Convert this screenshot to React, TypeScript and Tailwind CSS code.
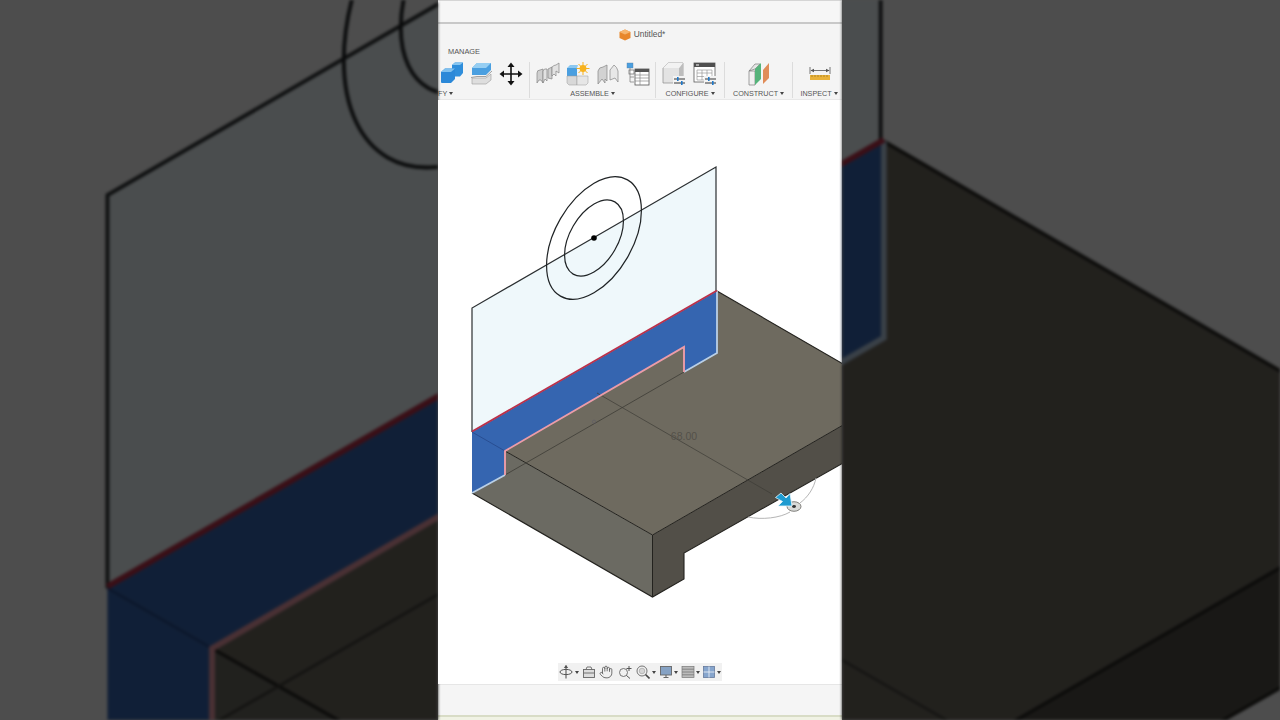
// App.tsx
import React from "react";
import { Hand } from "lucide-react";

function Model({ withLabel }: { withLabel?: boolean }) {
  return (
    <>
      {/* sketch plane */}
      <polygon points="472,308 716,167 716,291 472,432" fill="#eff8fb" />
      <polyline points="472,432 472,308 716,167 716,291" fill="none" stroke="#2b2f31" strokeWidth="1.2" />
      <ellipse cx="594" cy="238" rx="67.1" ry="38.7" transform="rotate(-60 594 238)" fill="none" stroke="#1f2325" strokeWidth="1.2" />
      <ellipse cx="594" cy="238" rx="41.7" ry="24" transform="rotate(-60 594 238)" fill="none" stroke="#1f2325" strokeWidth="1.2" />
      <circle cx="594" cy="238" r="2.8" fill="#000" />

      {/* solid */}
      <polygon points="505,451 684,347 684,372 717,353 717,291 850,368 850,421 652.5,535" fill="#6e6a5f" />
      <polygon points="472,493 505,475 505,451 652.5,535 652.5,597" fill="#6b6a62" />
      <polygon points="652.5,535 850,421 850,459 684,553 684,579 652.5,597" fill="#524f48" />
      <polygon points="472,432 717,291 717,353 684,372 684,347 505,451 505,475 472,493" fill="#3565b0" />

      <polyline points="717,291 850,368" fill="none" stroke="#23221e" strokeWidth="1.1" />
      <polyline points="505,451 652.5,535 850,421" fill="none" stroke="#23221e" strokeWidth="1" />
      <polyline points="472,493 652.5,597 684,579 684,553 850,459" fill="none" stroke="#23221e" strokeWidth="1.1" />
      <line x1="652.5" y1="535" x2="652.5" y2="597" stroke="#23221e" strokeWidth="1" />
      <line x1="505" y1="475" x2="684" y2="372" stroke="#3d3c36" strokeWidth="0.8" />
      <line x1="597" y1="393" x2="772" y2="494" stroke="#3d3c36" strokeWidth="0.7" />
      <line x1="472" y1="432" x2="505" y2="451" stroke="#25488a" strokeWidth="0.8" />
      <polyline points="472,493 505,475" fill="none" stroke="#b9cfe6" strokeWidth="1.8" />
      <polyline points="684,372 717,353 717,291" fill="none" stroke="#b9cfe6" strokeWidth="1.8" />
      <polyline points="505,475 505,451 684,347 684,372" fill="none" stroke="#ec9ca8" strokeWidth="1.9" />
      <line x1="472" y1="431.5" x2="717" y2="290.5" stroke="#bb3049" strokeWidth="1.8" />
      <circle cx="594" cy="421.7" r="1.6" fill="none" stroke="#5c5a66" strokeWidth="0.6" />

      {withLabel && (
        <text x="684" y="440" textAnchor="middle" fontSize="10.5" fill="#54514a" fontFamily="Liberation Sans, sans-serif">
          68.00
        </text>
      )}

      {/* drag handle */}
      <path d="M748 517 C762 520 780 518 790 512" fill="none" stroke="#b5b5b5" strokeWidth="1" />
      <path d="M800 503 C808 497 814 488 816 478" fill="none" stroke="#b5b5b5" strokeWidth="1" />
      <ellipse cx="794" cy="506.5" rx="7" ry="4.8" fill="#d9dad8" stroke="#55534d" strokeWidth="0.7" />
      <ellipse cx="794" cy="506.5" rx="2" ry="1.4" fill="#333" />
      <polygon points="792,506 778,506 782.5,501.5 775.5,497.5 781,493 786,498 790,493.5" fill="#1e9bd0" stroke="#e8f6fb" strokeWidth="0.8" />
    </>
  );
}

function Caret({ className = "" }: { className?: string }) {
  return (
    <svg viewBox="0 0 4 3" className={`h-[3px] w-[4px] shrink-0 ${className}`}>
      <polygon points="0,0 4,0 2,3" fill="#444" />
    </svg>
  );
}

function Combine() {
  return (
    <svg viewBox="0 0 24 24" className="h-6 w-6 shrink-0">
      <path d="M12 3 L15 0.5 H23 V11 L20 14.5 H12 Z" fill="#2f8edb" />
      <path d="M12 3 L15 0.5 H23 L20 3 Z" fill="#86c5f0" />
      <path d="M1 10 L5 6.5 H15 V17 L11 21 H2 Q1 21 1 20 Z" fill="#2b88d8" />
      <path d="M1 10 L5 6.5 H15 L11 10 Z" fill="#7fc0ee" />
    </svg>
  );
}

function SplitBox() {
  return (
    <svg viewBox="0 0 23 24" className="h-6 w-[23px] shrink-0">
      <path d="M2 6 L7 1 H21 V8 L16 13 H2 Z" fill="#4a9fe0" />
      <path d="M2 6 L7 1 H21 L16 6 Z" fill="#96cef2" />
      <path d="M1 15.5 L7 14.5 H16 L22 9" fill="none" stroke="#8a8a8a" strokeWidth="0.8" />
      <path d="M2 16 H16 L21 12 V18 L16 22 H2 Z" fill="#dedede" stroke="#9a9a9a" strokeWidth="0.6" />
    </svg>
  );
}

function MoveArrows() {
  return (
    <svg viewBox="0 0 24 24" className="h-6 w-6 shrink-0">
      <path d="M12 4 V20 M4 12 H20" stroke="#111" strokeWidth="1.6" />
      <polygon points="12,0.5 8.5,5 15.5,5" fill="#111" />
      <polygon points="12,23.5 8.5,19 15.5,19" fill="#111" />
      <polygon points="0.5,12 5,8.5 5,15.5" fill="#111" />
      <polygon points="23.5,12 19,8.5 19,15.5" fill="#111" />
    </svg>
  );
}

function JointPair() {
  return (
    <svg viewBox="0 0 24 24" className="h-6 w-6 shrink-0">
      <path d="M1 21 V11 Q1 8 4 8 L7 7 V21 L5 18 H3 Z" fill="#cfcfcf" stroke="#858585" strokeWidth="0.7" />
      <path d="M7 21 V9 Q8 6 11 7 V19 L9 17 Z" fill="#e2e2e2" stroke="#858585" strokeWidth="0.7" />
      <path d="M12 16 V7 L16 5 V17 Z" fill="#cfcfcf" stroke="#858585" strokeWidth="0.7" />
      <path d="M16 14 V5 Q18 3 20 3 L23 1 V11 L20 9 V14 L18 12 Z" fill="#e2e2e2" stroke="#858585" strokeWidth="0.7" />
    </svg>
  );
}

function AsBuilt() {
  return (
    <svg viewBox="0 0 24 24" className="h-6 w-6 shrink-0">
      <path d="M1 6 H11 V14 H1 Z" fill="#4a9fe0" />
      <path d="M1 6 L4 3 H12 L11 6 Z" fill="#8cc8f0" />
      <path d="M1 14 H11 V23 H3 L1 21 Z" fill="#d8d8d8" stroke="#9a9a9a" strokeWidth="0.5" />
      <path d="M11 14 H22 V21 L20 23 H11 Z" fill="#e6e6e6" stroke="#9a9a9a" strokeWidth="0.5" />
      <circle cx="17" cy="6.5" r="3.4" fill="#f7b21e" />
      <path d="M17 0 V13 M10.5 6.5 H23.5 M12.5 2 L21.5 11 M21.5 2 L12.5 11" stroke="#f7b21e" strokeWidth="1" />
    </svg>
  );
}

function JointSingle() {
  return (
    <svg viewBox="0 0 24 24" className="h-6 w-6 shrink-0">
      <path d="M2 22 V9 Q3 5 7 5 L11 3 V19 L9 17 V21 L6 17 Z" fill="#d2d2d2" stroke="#858585" strokeWidth="0.7" />
      <path d="M14 18 V8 L18 3 Q21 5 22 9 V20 L19 16 Z" fill="#e8e8e8" stroke="#858585" strokeWidth="0.7" />
    </svg>
  );
}

function TreeTable() {
  return (
    <svg viewBox="0 0 24 24" className="h-6 w-6 shrink-0">
      <rect x="1" y="1" width="6" height="5" fill="#4a9fe0" stroke="#5a7fa0" strokeWidth="0.4" />
      <rect x="3" y="8" width="5" height="4" fill="#fff" stroke="#666" strokeWidth="0.7" />
      <path d="M4 6 V20 H8 M4 15 H8" fill="none" stroke="#777" strokeWidth="0.7" />
      <rect x="9" y="7" width="14" height="16" fill="#fff" stroke="#555" strokeWidth="0.8" />
      <rect x="9" y="7" width="14" height="3" fill="#555" />
      <path d="M9 13 H23 M9 16 H23 M9 19 H23 M14 10 V23" stroke="#888" strokeWidth="0.7" />
    </svg>
  );
}

function Sliders() {
  return (
    <>
      <path d="M12 17 H23 M12 21 H23" stroke="#222" strokeWidth="0.9" />
      <rect x="15" y="15" width="1.6" height="4" fill="#1f78c8" />
      <rect x="19" y="19" width="1.6" height="4" fill="#1f78c8" />
    </>
  );
}

function ConfigBox() {
  return (
    <svg viewBox="0 0 24 24" className="h-6 w-6 shrink-0">
      <path d="M1 6 L6 1 H21 V17 L17 21 H1 Z" fill="#e3e3e3" stroke="#8a8a8a" strokeWidth="0.7" />
      <path d="M17 6 L21 1 V17 L17 21 Z" fill="#bdbdbd" />
      <path d="M1 6 L6 1 H21 L17 6 Z" fill="#f2f2f2" />
      <rect x="11" y="14" width="13" height="10" fill="#f3f3f3" />
      <Sliders />
    </svg>
  );
}

function ConfigTable() {
  return (
    <svg viewBox="0 0 24 24" className="h-6 w-6 shrink-0">
      <rect x="1" y="1" width="21" height="19" fill="#fff" stroke="#5a5a5a" strokeWidth="0.8" />
      <rect x="1" y="1" width="21" height="4" fill="#4f4f4f" />
      <rect x="3" y="2.5" width="3" height="1" fill="#fff" />
      <path d="M4 8 H19 V18 H4 Z M4 11 H19 M4 14.5 H19 M9 8 V18 M14 8 V18" fill="none" stroke="#8a8a8a" strokeWidth="0.6" />
      <rect x="11" y="14" width="13" height="10" fill="#f3f3f3" />
      <Sliders />
    </svg>
  );
}

function PlanesIcon() {
  return (
    <svg viewBox="0 0 24 24" className="h-6 w-6 shrink-0">
      <path d="M3 9 L9 2 H14 L9 7 Z" fill="#e6e6e6" stroke="#7b7b7b" strokeWidth="0.7" />
      <path d="M3 9 H9 V23 H3 Z" fill="#f0f0f0" stroke="#7b7b7b" strokeWidth="0.7" />
      <path d="M9 7 L15 1 V17 L9 23 Z" fill="#55b37a" />
      <path d="M17 8 L23 1 V16 L17 22 Z" fill="#e08c58" />
    </svg>
  );
}

function RulerIcon() {
  return (
    <svg viewBox="0 0 24 24" className="h-6 w-6 shrink-0">
      <path d="M2 5 V12 M22 5 V12 M3 8.5 H21" stroke="#555" strokeWidth="0.8" />
      <polygon points="2.5,8.5 6,6.8 6,10.2" fill="#555" />
      <polygon points="21.5,8.5 18,6.8 18,10.2" fill="#555" />
      <rect x="2" y="13" width="20" height="5" fill="#e9b23a" />
      <path d="M4 13 V15 M7 13 V15 M10 13 V15 M13 13 V15 M16 13 V15 M19 13 V15" stroke="#8a6a1c" strokeWidth="0.6" />
    </svg>
  );
}

function Orbit() {
  return (
    <svg viewBox="0 0 14 14" className="ml-[1px] h-3.5 w-3.5 shrink-0">
      <path d="M7 0.5 V13.5" stroke="#555" strokeWidth="1.1" />
      <ellipse cx="7" cy="7" rx="6" ry="2.6" fill="none" stroke="#555" strokeWidth="1" />
      <polygon points="7,0 4.8,3 9.2,3" fill="#555" />
    </svg>
  );
}

function ViewBar() {
  return (
    <div className="absolute bottom-[3px] left-[120px] flex h-[18px] w-[164px] items-center bg-[#f1f1f1]">
      <Orbit />
      <Caret className="ml-[2px]" />
      <svg viewBox="0 0 14 14" className="ml-[3px] h-3.5 w-3.5 shrink-0">
        <rect x="1.5" y="4.5" width="11" height="8" fill="#ddd" stroke="#666" strokeWidth="0.9" />
        <path d="M4 4.5 L5 2 H9 L10 4.5 M1.5 8 H12.5" fill="none" stroke="#666" strokeWidth="0.9" />
      </svg>
      <Hand className="ml-[3px] h-3.5 w-3.5 shrink-0 text-[#555]" strokeWidth={1.4} />
      <svg viewBox="0 0 14 14" className="ml-[5px] h-3.5 w-3.5 shrink-0">
        <circle cx="5.5" cy="7.5" r="4" fill="none" stroke="#666" strokeWidth="0.9" />
        <path d="M8.5 10.5 L12 13.5 M11 1 V6 M8.5 3.5 H13.5" stroke="#555" strokeWidth="1" />
      </svg>
      <svg viewBox="0 0 14 14" className="ml-[4px] h-3.5 w-3.5 shrink-0">
        <circle cx="6" cy="6" r="5" fill="none" stroke="#666" strokeWidth="0.9" />
        <circle cx="6" cy="6" r="2.8" fill="#d5d5d5" stroke="#999" strokeWidth="0.6" />
        <path d="M9.5 9.5 L13.5 13.5" stroke="#444" strokeWidth="1.6" />
      </svg>
      <Caret className="ml-[2px]" />
      <svg viewBox="0 0 14 14" className="ml-[3px] h-3.5 w-3.5 shrink-0">
        <rect x="1.5" y="1.5" width="11" height="8.5" fill="#86a2c4" stroke="#666" strokeWidth="0.9" />
        <path d="M4.5 12.5 H9.5 M7 10 V12.5" stroke="#666" strokeWidth="1.1" />
      </svg>
      <Caret className="ml-[1px]" />
      <svg viewBox="0 0 14 14" className="ml-[3px] h-3.5 w-3.5 shrink-0">
        <rect x="1" y="1.5" width="12" height="11" fill="#bbb" stroke="#777" strokeWidth="0.7" />
        <path d="M1 4.2 H13 M1 7 H13 M1 9.8 H13" stroke="#777" strokeWidth="0.8" />
      </svg>
      <Caret className="ml-[1px]" />
      <svg viewBox="0 0 14 14" className="ml-[2px] h-3.5 w-3.5 shrink-0">
        <rect x="1.5" y="1.5" width="11" height="11" fill="#86a5cd" stroke="#64799c" strokeWidth="0.8" />
        <path d="M7 1.5 V12.5 M1.5 7 H12.5" stroke="#e6edf6" strokeWidth="0.9" />
      </svg>
      <Caret className="ml-[1px]" />
    </div>
  );
}

function GroupLabel({ text, className = "" }: { text: string; className?: string }) {
  return (
    <div className={`mt-[3px] flex h-[10px] items-center gap-[2px] text-[7.2px] leading-none whitespace-nowrap text-[#555] ${className}`}>
      {text}
      <Caret />
    </div>
  );
}

export default function App() {
  return (
    <div className="flex h-screen w-full overflow-hidden bg-[#4d4d4d] font-['Liberation_Sans',sans-serif]">
      <div className="h-full w-[438px] shrink-0">
        <svg viewBox="438.1 246.4 138.2 227.2" preserveAspectRatio="none" className="h-full w-full blur-[1.5px] brightness-[0.31]">
          <Model />
        </svg>
      </div>

      <div className="flex h-full w-[404px] shrink-0 flex-col bg-white">
        <div className="h-[22px] border-t border-[#d5d5d5] bg-[#f6f6f6]" />
        <div className="h-[2px] bg-[#c8c8c8]" />
        <div className="flex h-[21px] items-center justify-center gap-[3px] bg-[#f4f4f4] pl-1">
          <svg viewBox="0 0 12 12" className="h-3 w-3">
            <path d="M6 0.5 L11.5 3 V9 L6 11.5 L0.5 9 V3 Z" fill="#e8872b" />
            <path d="M6 0.5 L11.5 3 L6 5.5 L0.5 3 Z" fill="#f6b56e" />
          </svg>
          <span className="text-[8.4px] leading-none text-[#555]">Untitled*</span>
        </div>
        <div className="flex h-[14px] items-center bg-[#f4f4f4] pl-[10px] text-[7.4px] leading-none text-[#555]">MANAGE</div>
        <div className="flex h-[41px] items-stretch border-b border-[#e8e8e8] bg-[#f4f4f4] pt-[3px] pb-[1px]">
          <div className="flex w-[92px] shrink-0 flex-col border-r border-[#dcdcdc]">
            <div className="flex h-[24px] items-center gap-[6px] pl-[2px]">
              <Combine />
              <SplitBox />
              <MoveArrows />
            </div>
            <GroupLabel text="FY" />
          </div>
          <div className="flex w-[126px] shrink-0 flex-col items-stretch border-r border-[#dcdcdc]">
            <div className="flex h-[24px] items-center gap-[6px] pl-[6px]">
              <JointPair />
              <AsBuilt />
              <JointSingle />
              <TreeTable />
            </div>
            <GroupLabel text="ASSEMBLE" className="justify-center" />
          </div>
          <div className="flex w-[69px] shrink-0 flex-col border-r border-[#dcdcdc]">
            <div className="flex h-[24px] items-center gap-[7px] pl-[6px]">
              <ConfigBox />
              <ConfigTable />
            </div>
            <GroupLabel text="CONFIGURE" className="justify-center" />
          </div>
          <div className="flex w-[68px] shrink-0 flex-col border-r border-[#dcdcdc]">
            <div className="flex h-[24px] items-center pl-[21px]">
              <PlanesIcon />
            </div>
            <GroupLabel text="CONSTRUCT" className="justify-center" />
          </div>
          <div className="flex w-[49px] shrink-0 flex-col">
            <div className="flex h-[24px] items-center pl-[15px]">
              <RulerIcon />
            </div>
            <GroupLabel text="INSPECT" className="justify-center pl-[3px]" />
          </div>
        </div>

        <div className="relative min-h-0 flex-1 bg-white">
          <svg viewBox="438 100 404 584" preserveAspectRatio="none" className="h-full w-full">
            <Model withLabel />
          </svg>
          <ViewBar />
        </div>

        <div className="h-[31px] border-t border-[#e6e6e6] bg-[#f5f5f5]" />
        <div className="h-[5px] border-t-2 border-[#d8dcc6] bg-[#f0f2e4]" />
      </div>

      <div className="h-full w-[438px] shrink-0">
        <svg viewBox="703.8 246.4 138.2 227.2" preserveAspectRatio="none" className="h-full w-full blur-[1.5px] brightness-[0.31]">
          <Model />
        </svg>
      </div>
    </div>
  );
}
